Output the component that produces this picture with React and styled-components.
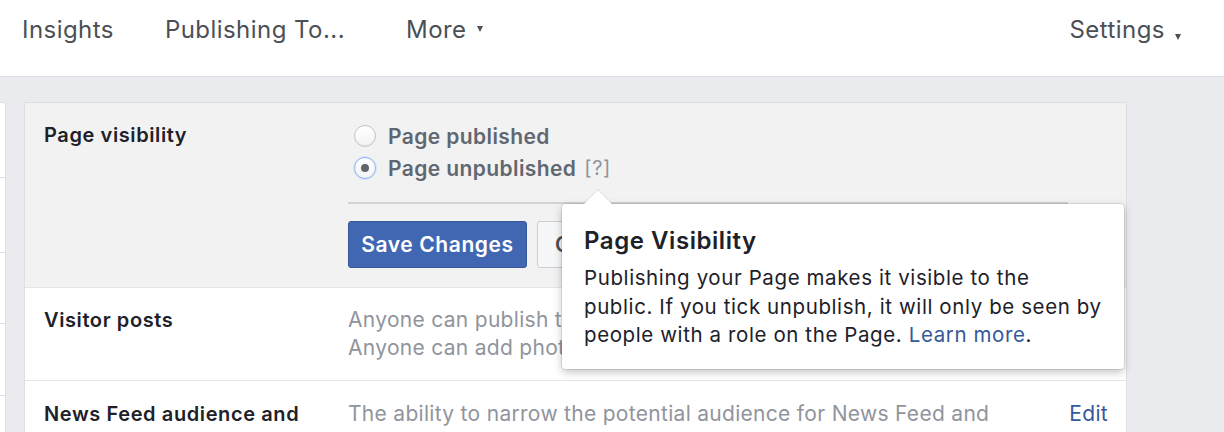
import React from "react";
import styled, { createGlobalStyle } from "styled-components";

const Global = createGlobalStyle`
  html, body { margin: 0; padding: 0; }
  body {
    background: #e9ebee;
    font-family: Inter, "Noto Sans", "Liberation Sans", sans-serif;
    color: #1d2129;
    overflow: hidden;
  }
`;

const Header = styled.header`
  height: 76px;
  background: #fff;
  border-bottom: 1px solid #dddfe2;
  display: flex;
  align-items: flex-start;
  padding: 0 0 0 22px;
`;

const Tab = styled.div`
  display: flex;
  align-items: center;
  height: 58px;
  margin-right: ${(p) => p.$mr || 0}px;
  margin-left: ${(p) => (p.$push ? "auto" : "0")};
  font-size: 24px;
  color: #4b4f56;
  letter-spacing: 0.45px;
`;

const Caret = styled.span`
  display: inline-block;
  width: 0;
  height: 0;
  border-left: 3.5px solid transparent;
  border-right: 3.5px solid transparent;
  border-top: 6px solid #4b4f56;
  margin-left: ${(p) => p.$ml || 8}px;
  position: relative;
  top: ${(p) => p.$dy || 0}px;
`;

const Body = styled.div`
  display: flex;
  align-items: flex-start;
  padding-top: 25px;
  gap: 18px;
`;

const Sidebar = styled.div`
  width: 5px;
  background: #fff;
  border: 1px solid #dddfe2;
  border-left: none;
  border-radius: 0 3px 0 0;
  display: flex;
  flex-direction: column;
`;

const SideItem = styled.div`
  height: ${(p) => p.$h}px;
  border-bottom: 1px solid #dddfe2;
`;

const Panel = styled.div`
  width: 1101px;
  border: 1px solid #dddfe2;
  border-bottom: none;
  background: #fff;
`;

const Row = styled.div`
  display: flex;
  position: relative;
  background: ${(p) => (p.$active ? "#f2f2f2" : "#fff")};
  border-bottom: 1px solid #e5e5e5;
  min-height: ${(p) => p.$h}px;
  box-sizing: border-box;
`;

const Label = styled.div`
  width: 323px;
  flex: none;
  padding: ${(p) => p.$pt}px 16px 0 19px;
  box-sizing: border-box;
  font-size: 20px;
  font-weight: 600;
  letter-spacing: 0.6px;
  color: #1d2129;
  line-height: 28px;
`;

const Content = styled.div`
  flex: 1;
  padding-top: ${(p) => p.$pt}px;
`;

const RadioList = styled.div`
  display: flex;
  flex-direction: column;
  padding-left: 6px;
`;

const RadioRow = styled.label`
  display: flex;
  align-items: center;
  height: 32px;
  font-size: 21px;
  font-weight: 600;
  letter-spacing: 0.4px;
  color: #606770;
`;

const RadioCircle = styled.span`
  width: 22px;
  height: 22px;
  border-radius: 50%;
  flex: none;
  margin-right: 12px;
  box-sizing: border-box;
  display: flex;
  align-items: center;
  justify-content: center;
  background: linear-gradient(#fff, #f3f3f3);
  border: 1px solid ${(p) => (p.$checked ? "#8fb2ee" : "#c4c4c4")};
  box-shadow: ${(p) => (p.$checked ? "0 0 0 1px #d5e3fb" : "inset 0 -1px 1px rgba(0,0,0,0.06)")};
  &::after {
    content: "";
    display: ${(p) => (p.$checked ? "block" : "none")};
    width: 8px;
    height: 8px;
    border-radius: 50%;
    background: #5f636b;
  }
`;

const Help = styled.span`
  font-weight: 400;
  color: #90949c;
  margin-left: 8px;
  font-size: 20px;
  letter-spacing: 0.5px;
`;

const Divider = styled.div`
  width: 720px;
  height: 2px;
  background: #d3d3d3;
  margin: 18px 0 17px;
`;

const Buttons = styled.div`
  display: flex;
  gap: 10px;
  padding-bottom: 19px;
`;

const Button = styled.button`
  height: 47px;
  padding: 0 12px;
  border-radius: 3px;
  font-family: inherit;
  font-size: 21px;
  font-weight: 600;
  letter-spacing: 0.6px;
  border: 1px solid ${(p) => (p.$primary ? "#365899" : "#ccd0d5")};
  background: ${(p) => (p.$primary ? "#4267b2" : "#f6f7f9")};
  color: ${(p) => (p.$primary ? "#fff" : "#4b4f56")};
  width: ${(p) => p.$w}px;
  white-space: nowrap;
`;

const Desc = styled.div`
  font-size: 21px;
  line-height: 28px;
  letter-spacing: 0.3px;
  color: #90949c;
  max-width: 668px;
`;

const EditLink = styled.a`
  position: absolute;
  right: 18px;
  top: ${(p) => p.$top}px;
  font-size: 21px;
  letter-spacing: 0.3px;
  line-height: 28px;
  color: #365899;
`;

const Tooltip = styled.div`
  position: absolute;
  left: 537px;
  top: 101px;
  width: 562px;
  height: 165px;
  box-sizing: border-box;
  background: #fff;
  border-radius: 4px;
  box-shadow: 0 0 0 1px rgba(0, 0, 0, 0.08), 0 3px 8px rgba(0, 0, 0, 0.25);
  padding: 22px 14px 0 22px;
  z-index: 5;
  &::before {
    content: "";
    position: absolute;
    left: 21px;
    top: -15px;
    width: 0;
    height: 0;
    border-left: 15px solid transparent;
    border-right: 15px solid transparent;
    border-bottom: 15px solid rgba(0, 0, 0, 0.1);
  }
  &::after {
    content: "";
    position: absolute;
    left: 22px;
    top: -14px;
    width: 0;
    height: 0;
    border-left: 14px solid transparent;
    border-right: 14px solid transparent;
    border-bottom: 14px solid #fff;
  }
`;

const TipTitle = styled.div`
  font-size: 24px;
  font-weight: 600;
  letter-spacing: 0.55px;
  line-height: 30px;
  color: #1d2129;
  margin-bottom: 8px;
`;

const TipText = styled.div`
  font-size: 20.5px;
  letter-spacing: 0.6px;
  line-height: 28.5px;
  color: #1d2129;
  a { color: #365899; text-decoration: none; }
`;

export default function App() {
  return (
    <>
      <Global />
      <Header>
        <Tab $mr={51}>Insights</Tab>
        <Tab $mr={61}>Publishing To...</Tab>
        <Tab>
          More<Caret $ml={10} />
        </Tab>
        <Tab $push $mr={43}>
          Settings<Caret $ml={10} $dy={8} />
        </Tab>
      </Header>
      <Body>
        <Sidebar>
          <SideItem $h={74} />
          <SideItem $h={74} />
          <SideItem $h={70} />
          <SideItem $h={71} />
          <SideItem $h={60} />
        </Sidebar>
        <Panel>
          <Row $active $h={185}>
            <Label $pt={18}>Page visibility</Label>
            <Content $pt={17}>
              <RadioList>
                <RadioRow>
                  <RadioCircle />
                  Page published
                </RadioRow>
                <RadioRow>
                  <RadioCircle $checked />
                  Page unpublished<Help>[?]</Help>
                </RadioRow>
              </RadioList>
              <Divider />
              <Buttons>
                <Button $primary $w={179}>Save Changes</Button>
                <Button $w={110}>Cancel</Button>
              </Buttons>
            </Content>
            <Tooltip>
              <TipTitle>Page Visibility</TipTitle>
              <TipText>
                Publishing your Page makes it visible to the
                <br />
                public. If you tick unpublish, it will only be seen by people
                with a role on the Page. <a href="#">Learn more</a>.
              </TipText>
            </Tooltip>
          </Row>
          <Row $h={93}>
            <Label $pt={18}>Visitor posts</Label>
            <Content $pt={18}>
              <Desc>
                Anyone can publish to the Page
                <br />
                Anyone can add photos and videos to the Page
              </Desc>
            </Content>
          </Row>
          <Row $h={80}>
            <Label $pt={19}>News Feed audience and visibility for posts</Label>
            <Content $pt={19}>
              <Desc>
                The ability to narrow the potential audience for News Feed and
                limit visibility on your posts is turned off
              </Desc>
            </Content>
            <EditLink $top={19}>Edit</EditLink>
          </Row>
        </Panel>
      </Body>
    </>
  );
}
